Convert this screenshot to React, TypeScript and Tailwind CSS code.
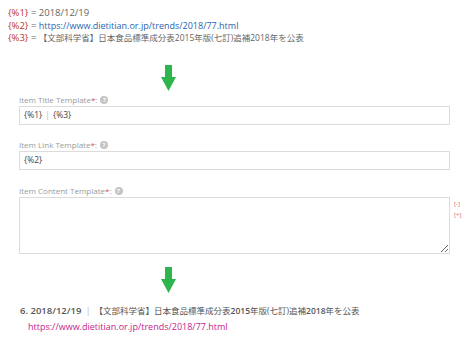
import React from 'react';

const font = { fontFamily: '"Open Sans", "Noto Sans CJK JP", sans-serif' };

function DownArrow() {
    return (
        <div className="flex pl-[161px]">
            <svg width="15" height="26" viewBox="0 0 15 26">
                <rect x="4" y="0" width="7" height="13" fill="#2fb54d" />
                <polygon points="0,12 15,12 7.5,26" fill="#2fb54d" />
            </svg>
        </div>
    );
}

function Help() {
    return (
        <span className="inline-flex items-center justify-center w-[8px] h-[8px] rounded-full bg-[#c4c4c4] text-white text-[6px] leading-none ml-[3px] font-bold">
            ?
        </span>
    );
}

function Label({ text }: { text: string }) {
    return (
        <div className="flex items-center h-[12px] text-[8px] text-[#9a9a9a]">
            <span>{text}</span>
            <span className="text-[#d9534f]">*</span>
            <span>:</span>
            <Help />
        </div>
    );
}

export default function App() {
    return (
        <div className="w-[474px] h-[351px] bg-white overflow-hidden pt-[7px]" style={font}>
            {/* variable definitions */}
            <div className="pl-[8px] text-[9.5px] leading-[12.5px] text-[#666]">
                <div>
                    <span className="text-[#c0392b]">{'{%1}'}</span> = 2018/12/19
                </div>
                <div>
                    <span className="text-[#c0392b]">{'{%2}'}</span> ={' '}
                    <span className="text-[#2a64b0] text-[9px]">https://www.dietitian.or.jp/trends/2018/77.html</span>
                </div>
                <div>
                    <span className="text-[#c0392b]">{'{%3}'}</span> ={' '}
                    <span className="text-[8.5px]">【文部科学省】日本食品標準成分表2015年版(七訂)追補2018年を公表</span>
                </div>
            </div>

            <div className="mt-[20px]">
                <DownArrow />
            </div>

            {/* template form */}
            <div className="pl-[19px] mt-[3px]">
                <Label text="Item Title Template" />
                <div className="w-[431px] h-[19px] border border-[#dcdcdc] flex items-center px-[4px] text-[8.5px] text-[#444]">
                    {'{%1}'} <span className="text-[#bbb] mx-[3px]">|</span> {'{%3}'}
                </div>

                <div className="mt-[14px]">
                    <Label text="Item Link Template" />
                    <div className="w-[431px] h-[19px] border border-[#dcdcdc] flex items-center px-[4px] text-[8.5px] text-[#444]">
                        {'{%2}'}
                    </div>
                </div>

                <div className="mt-[15px]">
                    <Label text="Item Content Template" />
                    <div className="flex">
                        <textarea
                            readOnly
                            className="w-[431px] h-[57px] border border-[#dcdcdc] outline-none"
                        />
                        <div className="flex flex-col ml-[4px] pt-[3px] gap-[3px] text-[6px] leading-[8px] text-[#e06a7a]">
                            <span>[-]</span>
                            <span>[+]</span>
                        </div>
                    </div>
                </div>
            </div>

            <div className="mt-[13px]">
                <DownArrow />
            </div>

            {/* result */}
            <div className="pl-[20px] mt-[10px] text-[9.5px] leading-[16px] text-[#555]">
                <div>
                    <span className="font-semibold">6. 2018/12/19</span>
                    <span className="text-[#bbb] mx-[4px]">|</span>
                    <span className="text-[8.5px]">
                        【文部科学省】日本食品標準成分表<span className="font-semibold">2015</span>年版(七訂)追補
                        <span className="font-semibold">2018</span>年を公表
                    </span>
                </div>
                <div className="pl-[8px] text-[#c2258a] text-[9px]">https://www.dietitian.or.jp/trends/2018/77.html</div>
            </div>
        </div>
    );
}
